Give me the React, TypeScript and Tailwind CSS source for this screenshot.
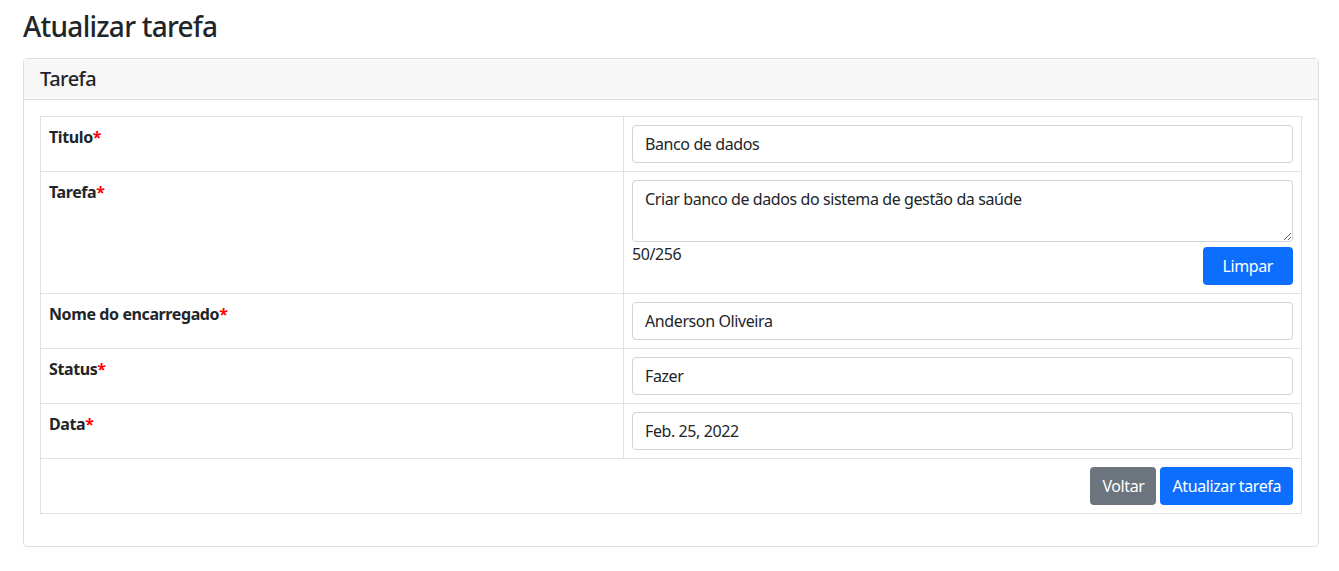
import React from "react";

const font = { fontFamily: '"Noto Sans", "Segoe UI", Roboto, sans-serif' };

function Label({ children }: { children: React.ReactNode }) {
  return (
    <span className="font-bold">
      {children}
      <span className="text-[#ff0000]">*</span>
    </span>
  );
}

function Input({ value }: { value: string }) {
  return (
    <input
      defaultValue={value}
      className="block w-full h-[38px] px-3 border border-[#ced4da] rounded-[4px] text-base tracking-[-0.4px] text-[#212529] bg-white outline-none"
    />
  );
}

export default function App() {
  return (
    <div className="min-h-screen bg-white text-[#212529] pl-[23px] pr-[20px] pt-[10px] tracking-[-0.4px]" style={font}>
      <h3 className="text-[28px] leading-[1.2] font-medium tracking-[-0.75px] mb-[14px]">Atualizar tarefa</h3>
      <div className="border border-[#dfdfdf] rounded-[4px]">
        <div className="bg-[#f7f7f7] border-b border-[#dfdfdf] px-4 h-[41px] flex items-center">
          <h5 className="text-[20px] font-medium tracking-[-0.5px]">Tarefa</h5>
        </div>
        <div className="p-4">
          <table className="w-full mb-4 border-collapse border border-[#dee2e6] text-base leading-6">
            <tbody>
              <tr>
                <td className="border border-[#dee2e6] p-2 align-top w-[583px]"><Label>Titulo</Label></td>
                <td className="border border-[#dee2e6] p-2 align-top"><Input value="Banco de dados" /></td>
              </tr>
              <tr>
                <td className="border border-[#dee2e6] p-2 align-top"><Label>Tarefa</Label></td>
                <td className="border border-[#dee2e6] p-2 align-top">
                  <textarea
                    rows={2}
                    defaultValue="Criar banco de dados do sistema de gestão da saúde"
                    className="block w-full h-[62px] px-3 py-[6px] border border-[#ced4da] rounded-[4px] text-base leading-6 tracking-[-0.4px] text-[#212529] outline-none"
                  />
                  <div className="flex justify-between items-start">
                    <span>50/256</span>
                    <button className="mt-[5px] bg-[#0d6efd] text-white rounded-[4px] px-5 h-[38px] leading-6">Limpar</button>
                  </div>
                </td>
              </tr>
              <tr>
                <td className="border border-[#dee2e6] p-2 align-top"><Label>Nome do encarregado</Label></td>
                <td className="border border-[#dee2e6] p-2 align-top"><Input value="Anderson Oliveira" /></td>
              </tr>
              <tr>
                <td className="border border-[#dee2e6] p-2 align-top"><Label>Status</Label></td>
                <td className="border border-[#dee2e6] p-2 align-top"><Input value="Fazer" /></td>
              </tr>
              <tr>
                <td className="border border-[#dee2e6] p-2 align-top"><Label>Data</Label></td>
                <td className="border border-[#dee2e6] p-2 align-top"><Input value="Feb. 25, 2022" /></td>
              </tr>
              <tr>
                <td colSpan={2} className="border border-[#dee2e6] p-2">
                  <div className="flex justify-end gap-1">
                    <button className="bg-[#6c757d] text-white rounded-[4px] px-3 h-[38px]">Voltar</button>
                    <button className="bg-[#0d6efd] text-white rounded-[4px] px-3 h-[38px]">Atualizar tarefa</button>
                  </div>
                </td>
              </tr>
            </tbody>
          </table>
        </div>
      </div>
    </div>
  );
}
